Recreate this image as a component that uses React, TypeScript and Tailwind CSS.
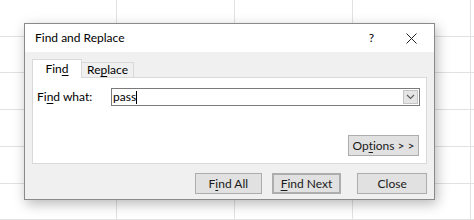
import React from 'react';

const font = { fontFamily: 'Lato, "Segoe UI", sans-serif' };

function Btn({ children, className = '' }: { children: React.ReactNode; className?: string }) {
  return (
    <div
      className={`flex h-[21px] items-center justify-center border border-[#adadad] bg-[#e1e1e1] text-[12px] text-[#1a1a1a] ${className}`}
    >
      {children}
    </div>
  );
}

export default function App() {
  const rows = [37, 36, 37, 37, 37, 36];
  const cols = [117, 118, 118, 118, 118];

  return (
    <div className="relative h-[220px] w-[474px] overflow-hidden bg-white" style={font}>
      {/* sheet grid behind */}
      <div className="flex flex-col">
        {rows.map((h, r) => (
          <div key={r} className="flex" style={{ height: h }}>
            {cols.map((w, c) => (
              <div key={c} className="shrink-0 border-b border-r border-[#e2e2e2]" style={{ width: w }} />
            ))}
          </div>
        ))}
      </div>

      {/* dialog */}
      <div className="absolute left-[24px] top-[23px] flex h-[177px] w-[411px] flex-col border border-[#8a8a8a] bg-[#f0f0f0] shadow-[2px_4px_12px_rgba(0,0,0,0.28)]">
        {/* title bar */}
        <div className="flex h-[28px] shrink-0 items-center bg-white pl-[10px] pr-[15px] text-[12px] text-black">
          <span className="flex-1">Find and Replace</span>
          <span className="mr-[32px] text-[12px]">?</span>
          <svg width="11" height="11" viewBox="0 0 11 11" className="mr-[2px]">
            <path d="M0.5 0.5 L10.5 10.5 M10.5 0.5 L0.5 10.5" stroke="#222" strokeWidth="1" />
          </svg>
        </div>

        {/* body */}
        <div className="flex flex-1 flex-col px-[7px] pt-[7px]">
          {/* tabs */}
          <div className="relative z-10 flex h-[18px] items-end">
            <div className="-mb-px flex h-[19px] w-[50px] items-center justify-center border border-b-0 border-[#d9d9d9] bg-white text-[12px] text-black">
              Fin<span className="underline underline-offset-2">d</span>
            </div>
            <div className="flex h-[15px] w-[52px] items-center justify-center border border-b-0 border-l-0 border-[#d9d9d9] bg-[#f0f0f0] text-[12px] text-black">
              Re<span className="underline underline-offset-2">p</span>lace
            </div>
          </div>

          {/* panel */}
          <div className="flex h-[87px] w-[395px] flex-col border border-[#d9d9d9] bg-white pl-[4px] pr-[6px] pt-[10px]">
            <div className="flex items-center">
              <span className="w-[74px] text-[12px] text-black">
                Fi<span className="underline underline-offset-2">n</span>d what:
              </span>
              <div className="flex h-[18px] flex-1 items-center border border-[#7a7a7a] bg-white">
                <span className="pl-[1px] text-[12px] text-black">pass</span>
                <span className="h-[13px] w-px bg-black" />
                <div className="flex-1" />
                <div className="mr-px flex h-[14px] w-[15px] items-center justify-center border border-[#c5c5c5] bg-[#e5e5e5]">
                  <svg width="9" height="6" viewBox="0 0 9 6">
                    <path d="M1 1 L4.5 4.5 L8 1" stroke="#606060" strokeWidth="1.2" fill="none" />
                  </svg>
                </div>
              </div>
            </div>
            <div className="mt-[29px] flex justify-end pr-px">
              <Btn className="w-[71px]">
                Op<span className="underline underline-offset-2">t</span>ions &gt; &gt;
              </Btn>
            </div>
          </div>

          {/* bottom buttons */}
          <div className="mt-[9px] flex items-center">
            <Btn className="ml-[163px] w-[67px]">
              F<span className="underline underline-offset-2">i</span>nd All
            </Btn>
            <Btn className="ml-[10px] w-[70px] border-2 border-[#0078d7]">
              <span className="underline underline-offset-2">F</span>ind Next
            </Btn>
            <Btn className="ml-[16px] w-[70px]">Close</Btn>
          </div>
        </div>
      </div>
    </div>
  );
}
